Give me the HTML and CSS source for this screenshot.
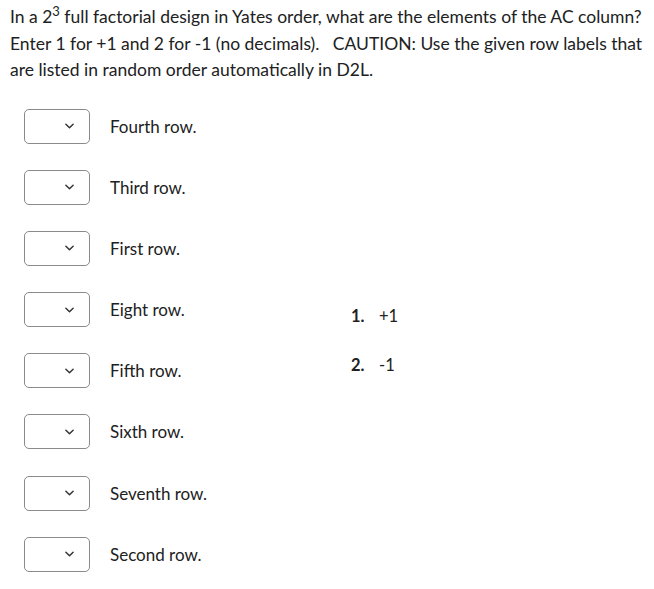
FILE: index.html
```html
<!DOCTYPE html>
<html>
<head>
<meta charset="utf-8">
<link rel="stylesheet" href="styles.css">
</head>
<body>
<p class="question">In a 2<sup>3</sup> full factorial design in Yates order, what are the elements of the AC column? Enter 1 for +1 and 2 for -1 (no decimals).&nbsp;&nbsp; CAUTION: Use the given row labels that are listed in random order automatically in D2L.</p>
<div class="match">
  <div class="rows">
    <div class="row"><div class="select"><svg class="chev" viewBox="0 0 10 6" width="9" height="6"><path d="M1 1l4 4 4-4" fill="none" stroke="#333" stroke-width="1.6" stroke-linecap="round" stroke-linejoin="round"/></svg></div><span class="label">Fourth row.</span></div>
    <div class="row"><div class="select"><svg class="chev" viewBox="0 0 10 6" width="9" height="6"><path d="M1 1l4 4 4-4" fill="none" stroke="#333" stroke-width="1.6" stroke-linecap="round" stroke-linejoin="round"/></svg></div><span class="label">Third row.</span></div>
    <div class="row"><div class="select"><svg class="chev" viewBox="0 0 10 6" width="9" height="6"><path d="M1 1l4 4 4-4" fill="none" stroke="#333" stroke-width="1.6" stroke-linecap="round" stroke-linejoin="round"/></svg></div><span class="label">First row.</span></div>
    <div class="row"><div class="select"><svg class="chev" viewBox="0 0 10 6" width="9" height="6"><path d="M1 1l4 4 4-4" fill="none" stroke="#333" stroke-width="1.6" stroke-linecap="round" stroke-linejoin="round"/></svg></div><span class="label">Eight row.</span></div>
    <div class="row"><div class="select"><svg class="chev" viewBox="0 0 10 6" width="9" height="6"><path d="M1 1l4 4 4-4" fill="none" stroke="#333" stroke-width="1.6" stroke-linecap="round" stroke-linejoin="round"/></svg></div><span class="label">Fifth row.</span></div>
    <div class="row"><div class="select"><svg class="chev" viewBox="0 0 10 6" width="9" height="6"><path d="M1 1l4 4 4-4" fill="none" stroke="#333" stroke-width="1.6" stroke-linecap="round" stroke-linejoin="round"/></svg></div><span class="label">Sixth row.</span></div>
    <div class="row"><div class="select"><svg class="chev" viewBox="0 0 10 6" width="9" height="6"><path d="M1 1l4 4 4-4" fill="none" stroke="#333" stroke-width="1.6" stroke-linecap="round" stroke-linejoin="round"/></svg></div><span class="label">Seventh row.</span></div>
    <div class="row"><div class="select"><svg class="chev" viewBox="0 0 10 6" width="9" height="6"><path d="M1 1l4 4 4-4" fill="none" stroke="#333" stroke-width="1.6" stroke-linecap="round" stroke-linejoin="round"/></svg></div><span class="label">Second row.</span></div>
  </div>
  <ol class="choices">
    <li><span class="num">1.</span><span class="val">+1</span></li>
    <li><span class="num">2.</span><span class="val">-1</span></li>
  </ol>
</div>
</body>
</html>
```
FILE: styles.css
```css
body {
  margin: 0;
  padding: 0 10px;
  font-family: Lato, "Liberation Sans", sans-serif;
  color: #202122;
  background: #fff;
}
.question {
  margin: 4px 0 0;
  font-size: 17.5px;
  line-height: 26.5px;
}
.question sup {
  font-size: 13px;
  line-height: 0;
  vertical-align: 7px;
}
.match {
  display: flex;
  align-items: center;
  margin-top: 25px;
}
.rows {
  display: flex;
  flex-direction: column;
  gap: 26.2px;
  width: 341px;
}
.row {
  display: flex;
  align-items: center;
  height: 35px;
}
.select {
  box-sizing: border-box;
  width: 66px;
  height: 35px;
  margin-left: 14px;
  border: 1px solid #8a8a8a;
  border-radius: 5px;
  display: flex;
  align-items: center;
  justify-content: flex-end;
  padding-right: 15px;
}
.chev { display: block; }
.label {
  margin-left: 20px;
  font-size: 17px;
  color: #202122;
}
.choices {
  list-style: none;
  margin: 0;
  padding: 0;
  display: flex;
  flex-direction: column;
  gap: 27px;
  font-size: 16.5px;
}
.choices li {
  display: flex;
  line-height: 22px;
}
.num {
  width: 28px;
  font-weight: bold;
}
```
